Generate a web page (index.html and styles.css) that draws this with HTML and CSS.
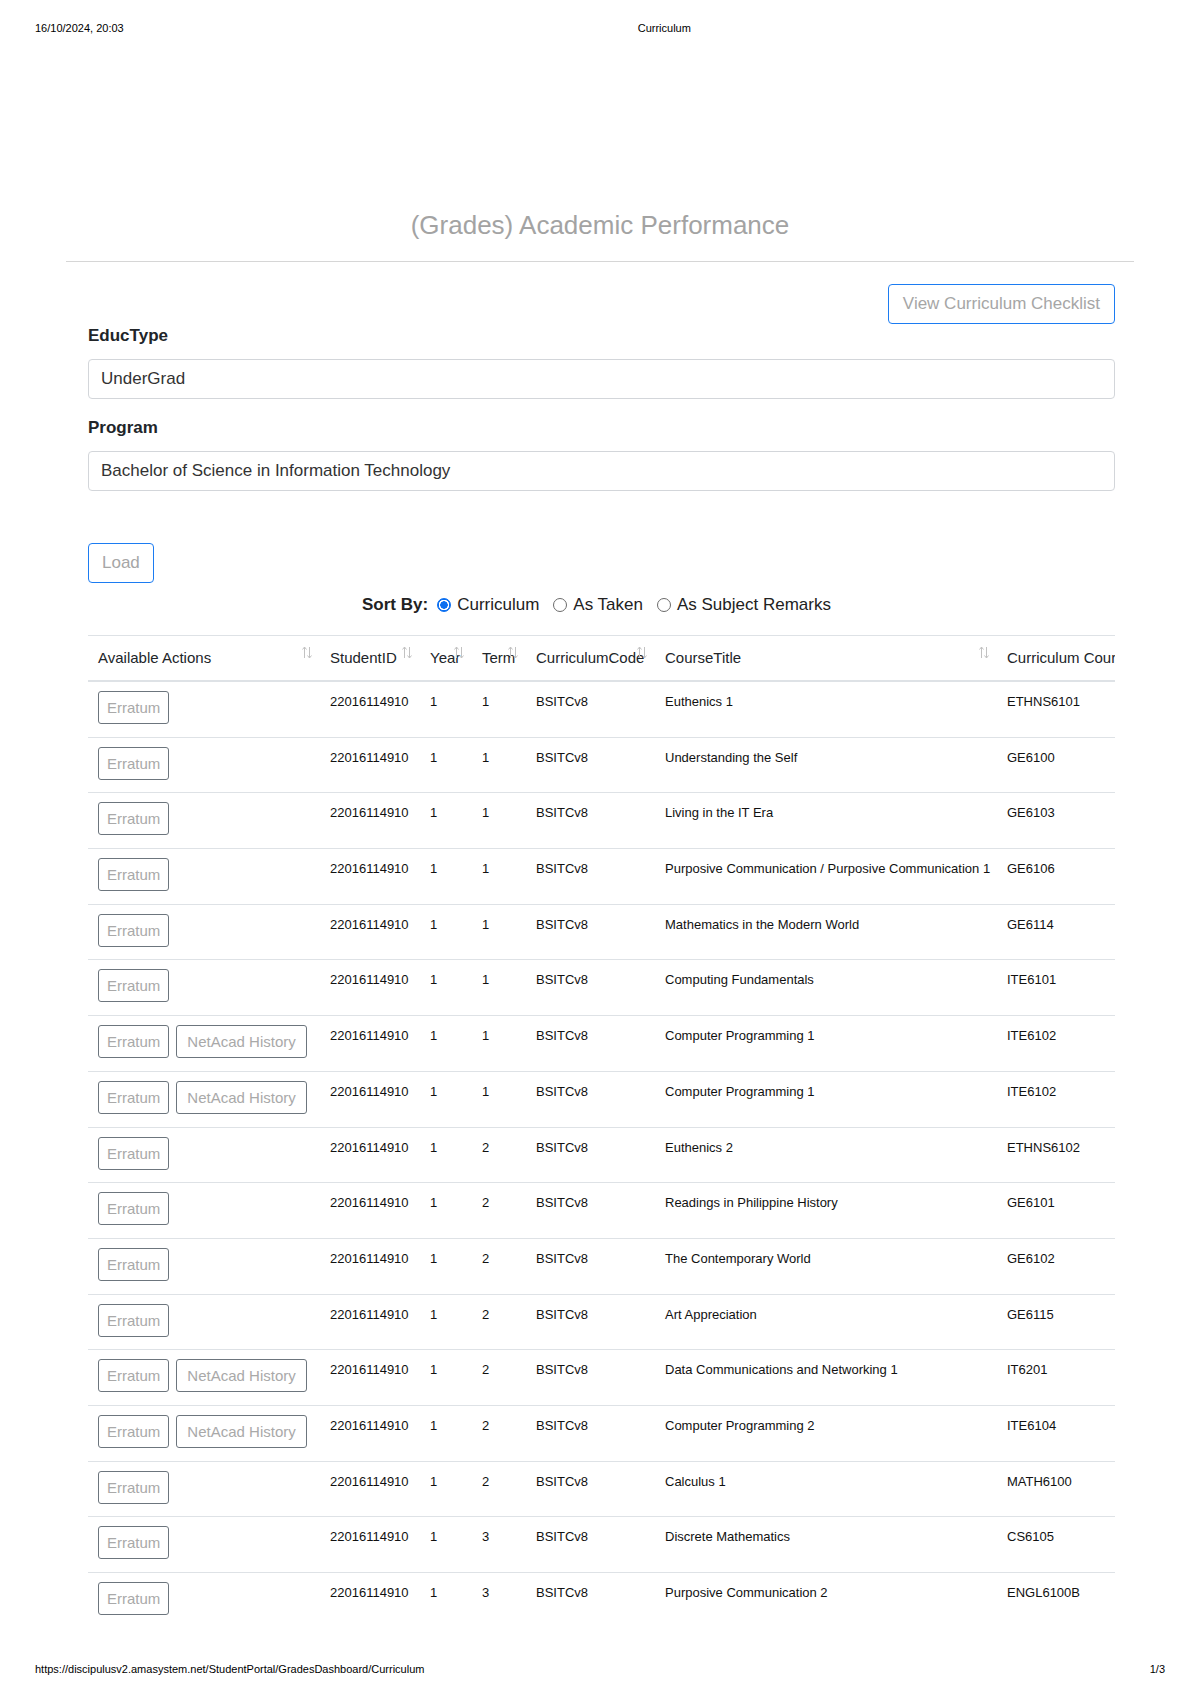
FILE: index.html
```html
<!DOCTYPE html>
<html>
<head>
<meta charset="utf-8">
<title>Curriculum</title>
<link rel="stylesheet" href="styles.css">
</head>
<body>
<div class="page">
  <div class="print-header">
    <span class="ph-date">16/10/2024, 20:03</span>
    <span class="ph-title">Curriculum</span>
  </div>
  <main class="main">
    <h1 class="page-title">(Grades) Academic Performance</h1>
    <div class="content">
      <div class="top-actions">
        <button class="btn btn-blue btn-check">View Curriculum Checklist</button>
      </div>
      <label class="field-label">EducType</label>
      <div class="field">UnderGrad</div>
      <label class="field-label">Program</label>
      <div class="field">Bachelor of Science in Information Technology</div>
      <div class="load-row">
        <button class="btn btn-blue btn-load">Load</button>
      </div>
      <div class="sort-row">
        <span class="sort-label">Sort By:</span>
        <label class="radio"><span class="radio-dot checked"></span>Curriculum</label>
        <label class="radio"><span class="radio-dot"></span>As Taken</label>
        <label class="radio"><span class="radio-dot"></span>As Subject Remarks</label>
      </div>
      <div class="table-wrap">
        <table class="grid">
          <colgroup>
            <col class="c1"><col class="c2"><col class="c3"><col class="c4"><col class="c5"><col class="c6"><col class="c7">
          </colgroup>
          <thead>
            <tr>
              <th>Available Actions<svg class="sort" viewBox="0 0 10 13"><path d="M2.5 12V1M0.5 3.5L2.5 1L4.5 3.5M7.5 1V12M5.5 9.5L7.5 12L9.5 9.5"/></svg></th>
              <th>StudentID<svg class="sort" viewBox="0 0 10 13"><path d="M2.5 12V1M0.5 3.5L2.5 1L4.5 3.5M7.5 1V12M5.5 9.5L7.5 12L9.5 9.5"/></svg></th>
              <th>Year<svg class="sort" viewBox="0 0 10 13"><path d="M2.5 12V1M0.5 3.5L2.5 1L4.5 3.5M7.5 1V12M5.5 9.5L7.5 12L9.5 9.5"/></svg></th>
              <th>Term<svg class="sort" viewBox="0 0 10 13"><path d="M2.5 12V1M0.5 3.5L2.5 1L4.5 3.5M7.5 1V12M5.5 9.5L7.5 12L9.5 9.5"/></svg></th>
              <th>CurriculumCode<svg class="sort" viewBox="0 0 10 13"><path d="M2.5 12V1M0.5 3.5L2.5 1L4.5 3.5M7.5 1V12M5.5 9.5L7.5 12L9.5 9.5"/></svg></th>
              <th>CourseTitle<svg class="sort" viewBox="0 0 10 13"><path d="M2.5 12V1M0.5 3.5L2.5 1L4.5 3.5M7.5 1V12M5.5 9.5L7.5 12L9.5 9.5"/></svg></th>
              <th>Curriculum Course Code</th>
            </tr>
          </thead>
          <tbody>
            <tr><td><button class="btn btn-gray">Erratum</button></td><td>22016114910</td><td>1</td><td>1</td><td>BSITCv8</td><td>Euthenics 1</td><td>ETHNS6101</td></tr>
            <tr><td><button class="btn btn-gray">Erratum</button></td><td>22016114910</td><td>1</td><td>1</td><td>BSITCv8</td><td>Understanding the Self</td><td>GE6100</td></tr>
            <tr><td><button class="btn btn-gray">Erratum</button></td><td>22016114910</td><td>1</td><td>1</td><td>BSITCv8</td><td>Living in the IT Era</td><td>GE6103</td></tr>
            <tr><td><button class="btn btn-gray">Erratum</button></td><td>22016114910</td><td>1</td><td>1</td><td>BSITCv8</td><td>Purposive Communication / Purposive Communication 1</td><td>GE6106</td></tr>
            <tr><td><button class="btn btn-gray">Erratum</button></td><td>22016114910</td><td>1</td><td>1</td><td>BSITCv8</td><td>Mathematics in the Modern World</td><td>GE6114</td></tr>
            <tr><td><button class="btn btn-gray">Erratum</button></td><td>22016114910</td><td>1</td><td>1</td><td>BSITCv8</td><td>Computing Fundamentals</td><td>ITE6101</td></tr>
            <tr><td><button class="btn btn-gray">Erratum</button><button class="btn btn-gray btn-net">NetAcad History</button></td><td>22016114910</td><td>1</td><td>1</td><td>BSITCv8</td><td>Computer Programming 1</td><td>ITE6102</td></tr>
            <tr><td><button class="btn btn-gray">Erratum</button><button class="btn btn-gray btn-net">NetAcad History</button></td><td>22016114910</td><td>1</td><td>1</td><td>BSITCv8</td><td>Computer Programming 1</td><td>ITE6102</td></tr>
            <tr><td><button class="btn btn-gray">Erratum</button></td><td>22016114910</td><td>1</td><td>2</td><td>BSITCv8</td><td>Euthenics 2</td><td>ETHNS6102</td></tr>
            <tr><td><button class="btn btn-gray">Erratum</button></td><td>22016114910</td><td>1</td><td>2</td><td>BSITCv8</td><td>Readings in Philippine History</td><td>GE6101</td></tr>
            <tr><td><button class="btn btn-gray">Erratum</button></td><td>22016114910</td><td>1</td><td>2</td><td>BSITCv8</td><td>The Contemporary World</td><td>GE6102</td></tr>
            <tr><td><button class="btn btn-gray">Erratum</button></td><td>22016114910</td><td>1</td><td>2</td><td>BSITCv8</td><td>Art Appreciation</td><td>GE6115</td></tr>
            <tr><td><button class="btn btn-gray">Erratum</button><button class="btn btn-gray btn-net">NetAcad History</button></td><td>22016114910</td><td>1</td><td>2</td><td>BSITCv8</td><td>Data Communications and Networking 1</td><td>IT6201</td></tr>
            <tr><td><button class="btn btn-gray">Erratum</button><button class="btn btn-gray btn-net">NetAcad History</button></td><td>22016114910</td><td>1</td><td>2</td><td>BSITCv8</td><td>Computer Programming 2</td><td>ITE6104</td></tr>
            <tr><td><button class="btn btn-gray">Erratum</button></td><td>22016114910</td><td>1</td><td>2</td><td>BSITCv8</td><td>Calculus 1</td><td>MATH6100</td></tr>
            <tr><td><button class="btn btn-gray">Erratum</button></td><td>22016114910</td><td>1</td><td>3</td><td>BSITCv8</td><td>Discrete Mathematics</td><td>CS6105</td></tr>
            <tr class="last"><td><button class="btn btn-gray">Erratum</button></td><td>22016114910</td><td>1</td><td>3</td><td>BSITCv8</td><td>Purposive Communication 2</td><td>ENGL6100B</td></tr>
          </tbody>
        </table>
      </div>
    </div>
  </main>
  <div class="print-footer">
    <span>https://discipulusv2.amasystem.net/StudentPortal/GradesDashboard/Curriculum</span>
    <span>1/3</span>
  </div>
</div>
</body>
</html>
```

FILE: styles.css
```css
* { box-sizing: border-box; }
html, body { margin: 0; padding: 0; background: #fff; }
body {
  font-family: "Liberation Sans", Arial, sans-serif;
  color: #212529;
}
.page {
  width: 1200px;
  height: 1698px;
  display: flex;
  flex-direction: column;
  overflow: hidden;
}
.print-header {
  display: flex;
  padding: 22px 35px 0;
  font-size: 11px;
  line-height: 13px;
  color: #000;
}
.ph-title { margin-left: 514px; }
.main {
  flex: 1;
  margin: 0 66px;
  overflow: hidden;
}
.page-title {
  margin: 175px 0 0;
  padding-bottom: 21px;
  font-size: 26px;
  line-height: 30px;
  font-weight: 400;
  color: #a3a3a3;
  text-align: center;
  border-bottom: 1px solid #d6d6d6;
}
.content {
  padding: 0 19px 0 22px;
}
.top-actions {
  display: flex;
  justify-content: flex-end;
  padding-top: 22px;
}
.btn {
  font-family: "Liberation Sans", Arial, sans-serif;
  background: #fff;
  cursor: pointer;
}
.btn-blue {
  height: 40px;
  border: 1.5px solid #1c7cf2;
  border-radius: 4px;
  color: #a6a6a6;
  font-size: 17px;
  padding: 0 12px;
}
.btn-check { padding: 0 14px; }
.field-label {
  display: block;
  margin-top: 2px;
  font-size: 17px;
  line-height: 20px;
  font-weight: 700;
  color: #212529;
}
.field {
  margin-top: 13px;
  height: 40px;
  border: 1.5px solid #d3d6da;
  border-radius: 4px;
  padding: 0 12px;
  display: flex;
  align-items: center;
  font-size: 17px;
  color: #333;
}
.field + .field-label { margin-top: 19px; }
.load-row { padding-top: 52px; }
.btn-load { padding: 0 13px; }
.sort-row {
  margin-top: 12px;
  display: flex;
  justify-content: center;
  align-items: center;
  font-size: 17px;
  line-height: 20px;
  color: #222;
  gap: 14px;
  padding-right: 10px;
}
.sort-label { font-weight: 700; margin-right: -5px; }
.radio { display: flex; align-items: center; gap: 6px; }
.radio-dot {
  width: 14px;
  height: 14px;
  border-radius: 50%;
  border: 1px solid #6b6b6b;
  background: #fff;
}
.radio-dot.checked {
  border: 1px solid #0b6ff0;
  background: radial-gradient(circle, #0b6ff0 0 3.5px, #fff 4px 5px, #0b6ff0 5.5px);
}
.table-wrap {
  margin-top: 20px;
  width: 100%;
  overflow: hidden;
}
.grid {
  width: 1069px;
  table-layout: fixed;
  border-collapse: collapse;
}
.c1 { width: 232px; }
.c2 { width: 100px; }
.c3 { width: 52px; }
.c4 { width: 54px; }
.c5 { width: 129px; }
.c6 { width: 342px; }
.c7 { width: 160px; }
.grid th {
  position: relative;
  text-align: left;
  font-weight: 400;
  font-size: 15px;
  line-height: 20px;
  color: #212529;
  padding: 12px 10px;
  border-top: 1.5px solid #dee2e6;
  border-bottom: 2px solid #dee2e6;
  white-space: nowrap;
}
.sort {
  position: absolute;
  right: 8px;
  top: 10px;
  width: 10px;
  height: 13px;
  fill: none;
  stroke: #c2c2c2;
  stroke-width: 1;
}
.grid td {
  vertical-align: top;
  font-size: 13px;
  line-height: 15px;
  color: #111;
  padding: 12px 10px 10px;
  border-top: 1.5px solid #dee2e6;
  white-space: nowrap;
}
.grid td:first-child { padding: 9px 10px 12.7px; }
.grid tbody tr:first-child td { border-top: 0; }
.btn-gray {
  height: 33px;
  border: 1.5px solid #6c757d;
  border-radius: 3px;
  color: #a9a9a9;
  font-size: 15px;
  padding: 0 8px;
  margin-right: 7px;
  vertical-align: top;
}
.btn-net { padding: 0 10px; }
.print-footer {
  display: flex;
  justify-content: space-between;
  padding: 0 35px 22px;
  font-size: 11px;
  line-height: 13px;
  color: #000;
}
```
